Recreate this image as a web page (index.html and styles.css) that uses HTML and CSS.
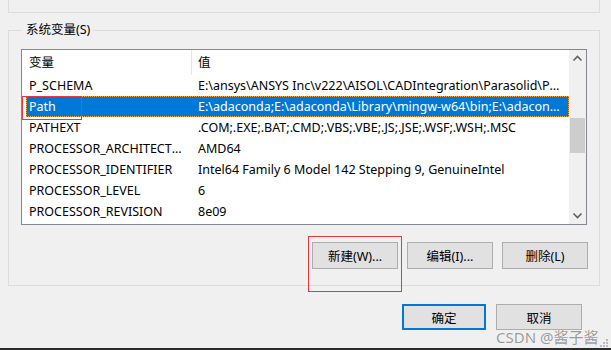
FILE: index.html
```html
<!doctype html>
<html>
<head>
    <meta charset="UTF-8">
    <title>系统变量</title>
    <link rel="stylesheet" href="styles.css">
</head>
<body>
<div class="page">
    <div class="user-group"></div>

    <fieldset class="sys-group">
        <legend>系统变量(S)</legend>
        <div class="listbox">
            <div class="list">
                <div class="head">
                    <div class="col-name">变量</div>
                    <div class="col-value">值</div>
                </div>
                <div class="row"><div class="col-name">P_SCHEMA</div><div class="col-value">E:\ansys\ANSYS Inc\v222\AISOL\CADIntegration\Parasolid\PSchema\Parasolid</div></div>
                <div class="row selected"><div class="col-name">Path</div><div class="col-value">E:\adaconda;E:\adaconda\Library\mingw-w64\bin;E:\adaconda\Library\bin</div></div>
                <div class="row"><div class="col-name">PATHEXT</div><div class="col-value">.COM;.EXE;.BAT;.CMD;.VBS;.VBE;.JS;.JSE;.WSF;.WSH;.MSC</div></div>
                <div class="row"><div class="col-name">PROCESSOR_ARCHITECTURE</div><div class="col-value">AMD64</div></div>
                <div class="row"><div class="col-name">PROCESSOR_IDENTIFIER</div><div class="col-value">Intel64 Family 6 Model 142 Stepping 9, GenuineIntel</div></div>
                <div class="row"><div class="col-name">PROCESSOR_LEVEL</div><div class="col-value">6</div></div>
                <div class="row"><div class="col-name">PROCESSOR_REVISION</div><div class="col-value">8e09</div></div>
            </div>
            <div class="scrollbar">
                <svg class="arrow" width="17" height="17" viewBox="0 0 17 17"><polyline points="4.5,10.5 8.5,6.5 12.5,10.5" fill="none" stroke="#606060" stroke-width="1.6"/></svg>
                <div class="track"><div class="thumb"></div></div>
                <svg class="arrow" width="17" height="17" viewBox="0 0 17 17"><polyline points="4.5,6.5 8.5,10.5 12.5,6.5" fill="none" stroke="#606060" stroke-width="1.6"/></svg>
            </div>
        </div>
        <div class="actions">
            <button class="btn">新建(W)...</button>
            <button class="btn">编辑(I)...</button>
            <button class="btn">删除(L)</button>
        </div>
    </fieldset>

    <div class="dialog-actions">
        <button class="btn primary">确定</button>
        <button class="btn">取消</button>
    </div>

    <div class="taskbar"></div>

    <!-- annotations drawn over the screenshot -->
    <div class="mark mark-path"></div>
    <div class="mark mark-new"></div>
    <div class="watermark">CSDN @酱子酱</div>
    <svg class="grip" width="8" height="8" viewBox="0 0 8 8">
        <rect x="6" y="0" width="2" height="2" fill="#bcbcbc"/>
        <rect x="3" y="3" width="2" height="2" fill="#bcbcbc"/>
        <rect x="6" y="3" width="2" height="2" fill="#bcbcbc"/>
        <rect x="0" y="6" width="2" height="2" fill="#bcbcbc"/>
        <rect x="3" y="6" width="2" height="2" fill="#bcbcbc"/>
        <rect x="6" y="6" width="2" height="2" fill="#bcbcbc"/>
    </svg>
</div>
</body>
</html>
```

FILE: styles.css
```css
html, body {
    margin: 0;
    background: #f0f0f0;
}
body {
    font-family: "Noto Sans", "Noto Sans CJK SC", sans-serif;
    font-size: 12.5px;
    color: #000;
}
.page {
    position: relative;
    display: flex;
    flex-direction: column;
    height: 350px;
    overflow: hidden;
}
.user-group {
    height: 12px;
    margin: 0 11px 0 8px;
    border: 1px solid #dcdcdc;
    border-top: none;
}
.sys-group {
    margin: 9px 11px 0 8px;
    padding: 11px 11px 16px 12px;
    border: 1px solid #dcdcdc;
    min-width: 0;
}
.sys-group legend {
    padding: 0 3px 0 5px;
    margin-left: 0;
    line-height: 16px;
}
.listbox {
    display: flex;
    width: 564px;
    height: 174px;
    border: 1px solid #828790;
    background: #fff;
}
.list {
    flex: 1;
    min-width: 0;
}
.head, .row {
    display: flex;
    white-space: nowrap;
}
.head {
    height: 25px;
    line-height: 25px;
}
.head .col-name {
    border-right: 1px solid #e5e5e5;
}
.row {
    height: 21px;
    line-height: 21px;
    margin-left: 4px;
}
.col-name {
    width: 162px;
    padding-left: 7px;
    overflow: hidden;
    text-overflow: ellipsis;
    flex: none;
}
.row .col-name {
    width: 159px;
    padding-left: 3px;
    padding-right: 3px;
}
.col-value {
    flex: 1;
    min-width: 0;
    padding-left: 6px;
    padding-right: 6px;
    overflow: hidden;
    text-overflow: ellipsis;
}
.row .col-value {
    padding-left: 7px;
}
.row.selected {
    background: #0078d7;
    color: #fff;
    outline: 1px dotted #f7a94a;
    outline-offset: -1px;
}
.scrollbar {
    width: 17px;
    display: flex;
    flex-direction: column;
    background: #f0f0f0;
}
.arrow {
    display: block;
    flex: none;
}
.track {
    flex: 1;
    padding-top: 51px;
}
.thumb {
    margin: 0 1px;
    height: 35px;
    background: #cdcdcd;
}
.actions {
    display: flex;
    justify-content: flex-end;
    gap: 9px;
    margin-top: 17px;
}
.btn {
    width: 86px;
    height: 27px;
    padding: 0;
    font: inherit;
    color: #000;
    background: #e1e1e1;
    border: 1px solid #adadad;
    border-radius: 0;
}
.dialog-actions {
    display: flex;
    justify-content: flex-end;
    gap: 10px;
    margin: 18px 29px 0 0;
}
.dialog-actions .btn {
    height: 26px;
}
.btn.primary {
    width: 84px;
    border: 2px solid #0078d7;
}
.taskbar {
    margin-top: auto;
    height: 2px;
    background: #2b2b2b;
}
.mark {
    position: absolute;
    border: 1px solid #e8383d;
}
.mark-path {
    left: 22px;
    top: 96px;
    width: 58px;
    height: 22px;
}
.mark-new {
    left: 308px;
    top: 236px;
    width: 92px;
    height: 54px;
}
.watermark {
    position: absolute;
    left: 496px;
    top: 327px;
    font-size: 15px;
    line-height: 20px;
    color: rgba(120, 120, 120, 0.75);
    text-shadow: 0 0 1px #fff;
    white-space: nowrap;
}
.grip {
    position: absolute;
    right: 3px;
    bottom: 3px;
}
```
